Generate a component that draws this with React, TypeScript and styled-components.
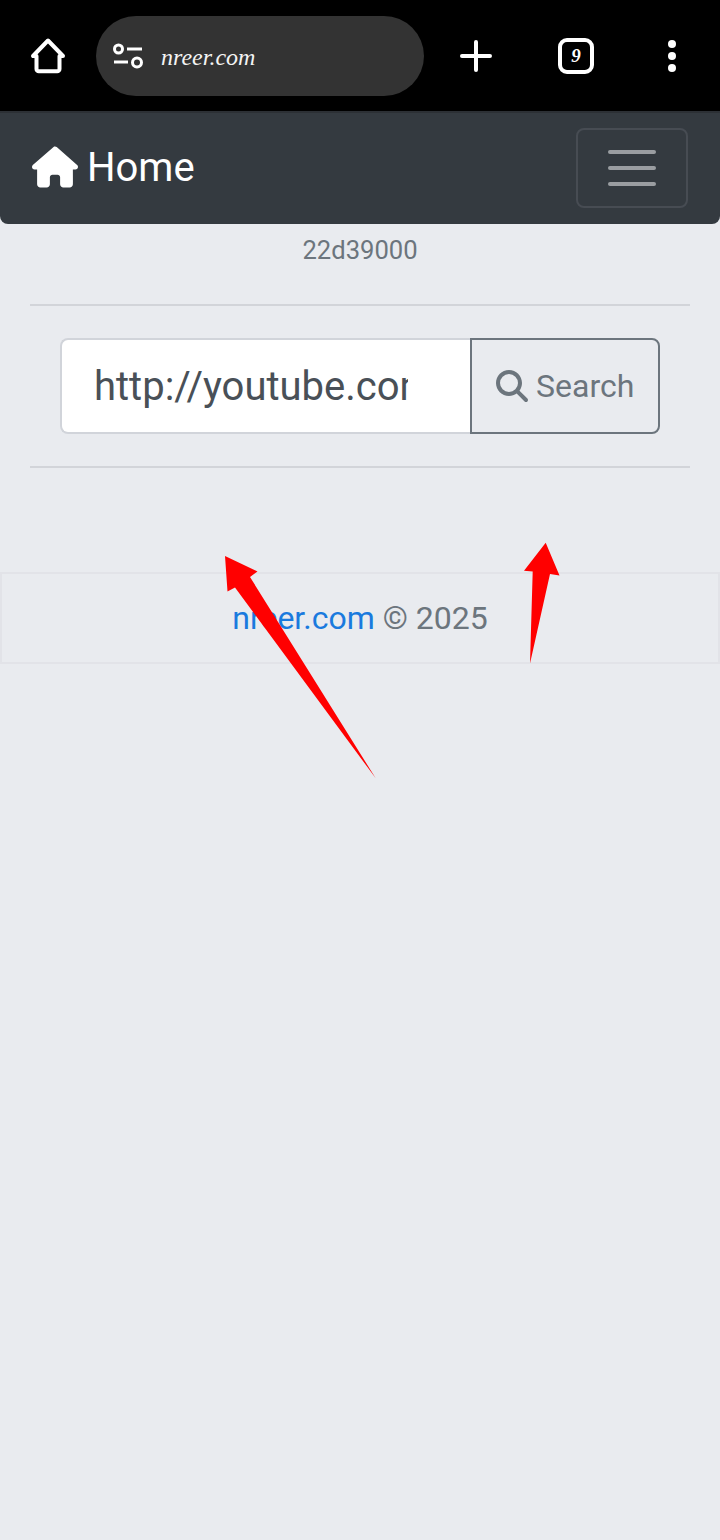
import React, { FC } from 'react'
import styled, { createGlobalStyle } from 'styled-components'
import { FaHouse, FaMagnifyingGlass } from 'react-icons/fa6'

const GlobalStyle = createGlobalStyle`
  html, body {
    margin: 0;
    padding: 0;
    background: #e9ebef;
  }
  * {
    box-sizing: border-box;
  }
`

const App: FC = (): JSX.Element => {
  return (
    <Page>
      <GlobalStyle />

      <BrowserBar>
        <Slot width={96}>
          <svg width="40" height="40" viewBox="0 0 40 40" fill="none" stroke="#fff" strokeWidth="4" strokeLinejoin="round">
            <path d="M20 4.5 L5 20 H8.5 V33 a2.3 2.3 0 0 0 2.3 2.3 H29.2 a2.3 2.3 0 0 0 2.3 -2.3 V20 H35 Z" />
          </svg>
        </Slot>
        <AddressPill>
          <svg width="32" height="28" viewBox="0 0 32 28" fill="none" stroke="#fff" strokeWidth="3">
            <circle cx="6.5" cy="7" r="4" />
            <path d="M15 7 H30" />
            <path d="M2 20 H16" />
            <circle cx="25" cy="20.5" r="4.5" />
          </svg>
          <AddressText>nreer.com</AddressText>
        </AddressPill>
        <Slot width={104}>
          <svg width="32" height="32" viewBox="0 0 32 32" stroke="#fff" strokeWidth="4" strokeLinecap="round">
            <path d="M16 2 V30 M2 16 H30" />
          </svg>
        </Slot>
        <Slot width={96}>
          <TabCount>9</TabCount>
        </Slot>
        <Slot width={96}>
          <svg width="8" height="32" viewBox="0 0 8 32" fill="#fff">
            <circle cx="4" cy="4" r="4" />
            <circle cx="4" cy="16" r="4" />
            <circle cx="4" cy="28" r="4" />
          </svg>
        </Slot>
      </BrowserBar>

      <Navbar>
        <Brand>
          <FaHouse size={46} />
          Home
        </Brand>
        <Toggler aria-label="menu">
          <TogglerBar />
          <TogglerBar />
          <TogglerBar />
        </Toggler>
      </Navbar>

      <Hash>22d39000</Hash>
      <Rule />
      <SearchGroup>
        <UrlInput readOnly value="http://youtube.com" />
        <SearchButton>
          <FaMagnifyingGlass size={32} />
          Search
        </SearchButton>
      </SearchGroup>
      <LowerRule />

      <Footer>
        <FooterLink href="#">nreer.com</FooterLink> © 2025
      </Footer>

      <Arrows viewBox="0 0 720 1540">
        <polygon points="225,556 257.5,571.5 250,577 375.7,778.3 235,587.5 227.5,591.5" />
        <polygon points="545.7,542.7 559.5,575.5 550,574 530,663.5 532.7,571.5 524,570.7" />
      </Arrows>
    </Page>
  )
}

export default App

const Page = styled.div`
  position: relative;
  width: 720px;
  height: 1540px;
  overflow: hidden;
  background: #e9ebef;
  font-family: Roboto, "Liberation Sans", sans-serif;
`
const BrowserBar = styled.div`
  display: flex;
  align-items: center;
  height: 111px;
  padding-top: 1px;
  background: #000;
`
const Slot = styled.div<{ width: number }>`
  display: flex;
  flex: none;
  align-items: center;
  justify-content: center;
  width: ${p => p.width}px;
`
const AddressPill = styled.div`
  display: flex;
  flex: none;
  align-items: center;
  gap: 17px;
  width: 328px;
  height: 80px;
  padding-left: 16px;
  border-radius: 40px;
  background: #333333;
`
const AddressText = styled.span`
  padding-top: 2px;
  color: #f4f4f4;
  font-family: "Liberation Serif", serif;
  font-size: 24px;
  font-style: italic;
`
const TabCount = styled.div`
  display: flex;
  align-items: center;
  justify-content: center;
  width: 36px;
  height: 36px;
  border: 4px solid #fff;
  border-radius: 9px;
  color: #fff;
  font-family: "Liberation Serif", serif;
  font-size: 19px;
  font-style: italic;
  font-weight: 700;
`
const Navbar = styled.nav`
  display: flex;
  align-items: center;
  justify-content: space-between;
  height: 113px;
  padding: 0 32px 1px;
  border-top: 2px solid #2c3035;
  border-radius: 0 0 8px 8px;
  background: #343a40;
`
const Brand = styled.div`
  display: flex;
  align-items: center;
  gap: 9px;
  padding-bottom: 2px;
  color: #fff;
  font-size: 40px;
`
const Toggler = styled.button`
  display: flex;
  flex-direction: column;
  align-items: center;
  justify-content: center;
  gap: 12px;
  width: 112px;
  height: 80px;
  padding: 0;
  border: 2px solid #474c53;
  border-radius: 8px;
  background: transparent;
`
const TogglerBar = styled.span`
  width: 48px;
  height: 4px;
  border-radius: 2px;
  background: #9a9da1;
`
const Hash = styled.div`
  display: flex;
  align-items: center;
  justify-content: center;
  height: 52px;
  color: #6c757d;
  font-size: 25.6px;
`
const Rule = styled.hr`
  height: 2px;
  margin: 28px 30px 0;
  border: 0;
  background: #d2d4d9;
`
const LowerRule = styled(Rule)`
  margin-top: 32px;
`
const SearchGroup = styled.div`
  display: flex;
  height: 96px;
  margin: 32px 60px 0;
`
const UrlInput = styled.input`
  flex: none;
  width: 410px;
  height: 100%;
  padding: 0 62px 0 32px;
  border: 2px solid #d1d4da;
  border-right: 0;
  border-radius: 8px 0 0 8px;
  outline: none;
  background: #fff;
  color: #495057;
  font-family: Roboto, "Liberation Sans", sans-serif;
  font-size: 40px;
`
const SearchButton = styled.button`
  display: flex;
  flex: 1;
  align-items: center;
  gap: 8px;
  padding: 0 0 0 24px;
  border: 2px solid #6c757d;
  border-radius: 0 8px 8px 0;
  background: transparent;
  color: #6c757d;
  font-family: Roboto, "Liberation Sans", sans-serif;
  font-size: 32px;
`
const Footer = styled.footer`
  display: flex;
  align-items: center;
  justify-content: center;
  gap: 0.25em;
  height: 92px;
  margin-top: 104px;
  border: 2px solid #e2e3e8;
  color: #6c757d;
  font-size: 32px;
`
const FooterLink = styled.a`
  color: #1a7ade;
  text-decoration: none;
`
const Arrows = styled.svg`
  position: absolute;
  top: 0;
  left: 0;
  width: 720px;
  height: 1540px;
  fill: #ff0000;
  pointer-events: none;
`
